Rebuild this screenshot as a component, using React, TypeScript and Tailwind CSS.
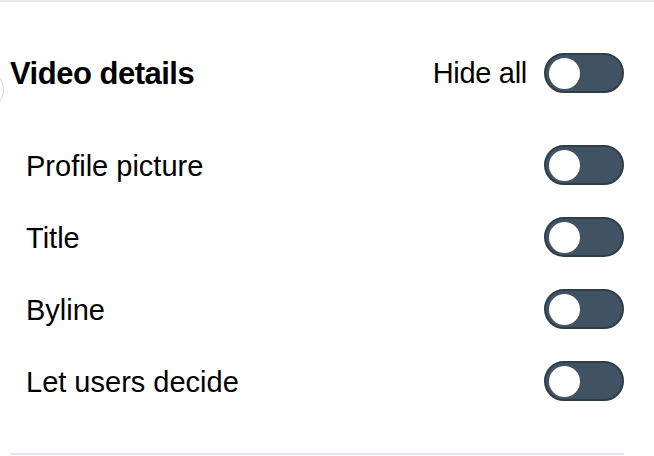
import React from "react";

function Toggle() {
  return (
    <div className="w-[80px] h-[40px] rounded-full bg-[#415262] border-2 border-[#2f3d49] flex items-center pl-[3px] shrink-0">
      <div className="w-[31px] h-[31px] rounded-full bg-white" />
    </div>
  );
}

const rows = ["Profile picture", "Title", "Byline", "Let users decide"];

export default function App() {
  return (
    <div
      className="relative w-[654px] h-[456px] overflow-hidden bg-white border-t-2 border-[#e5e9ec] text-black"
      style={{ fontFamily: '"Liberation Sans", Arial, sans-serif' }}
    >
      <div className="absolute left-[-36px] top-[68px] w-[40px] h-[40px] rounded-full border border-[#d3d9de]" />
      <div className="pl-[10px] pr-[30px]">
        <div className="mt-[51px] h-[40px] flex items-center justify-between">
          <div className="text-[31px] font-bold tracking-[-0.5px] pt-[2px]">Video details</div>
          <div className="flex items-center gap-[17px]">
            <span className="text-[29px] tracking-[-0.3px] pt-[2px]">Hide all</span>
            <Toggle />
          </div>
        </div>
        <div className="mt-[52px] flex flex-col gap-[32px] pl-[16px]">
          {rows.map((r) => (
            <div key={r} className="h-[40px] flex items-center justify-between">
              <span className="text-[29px] pt-[3px]">{r}</span>
              <Toggle />
            </div>
          ))}
        </div>
        <div className="mt-[52px] h-[2px] bg-[#e2e7eb]" />
      </div>
    </div>
  );
}
